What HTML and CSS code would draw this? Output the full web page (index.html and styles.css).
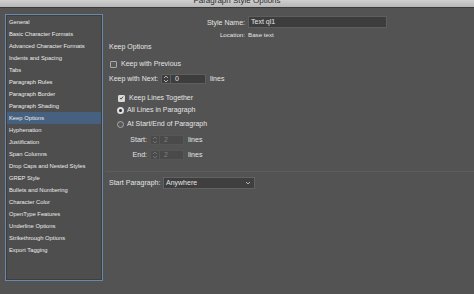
FILE: index.html
```html
<!DOCTYPE html>
<html>
<head>
<meta charset="utf-8">
<link rel="stylesheet" href="styles.css">
</head>
<body>
<div class="window">
  <div class="titlebar"><span class="title">Paragraph Style Options</span></div>
  <div class="main">
    <ul class="nav">
      <li>General</li>
      <li>Basic Character Formats</li>
      <li>Advanced Character Formats</li>
      <li>Indents and Spacing</li>
      <li>Tabs</li>
      <li>Paragraph Rules</li>
      <li>Paragraph Border</li>
      <li>Paragraph Shading</li>
      <li class="active">Keep Options</li>
      <li>Hyphenation</li>
      <li>Justification</li>
      <li>Span Columns</li>
      <li>Drop Caps and Nested Styles</li>
      <li>GREP Style</li>
      <li>Bullets and Numbering</li>
      <li>Character Color</li>
      <li>OpenType Features</li>
      <li>Underline Options</li>
      <li>Strikethrough Options</li>
      <li>Export Tagging</li>
    </ul>
    <div class="content">
      <div class="namerow">
        <span class="lbl">Style Name:</span>
        <div class="textfield">Text ql1</div>
      </div>
      <div class="locrow">
        <span class="lbl">Location:</span>
        <span>Base text</span>
      </div>
      <div class="heading">Keep Options</div>
      <div class="row kwp">
        <span class="check"></span>
        <span>Keep with Previous</span>
      </div>
      <div class="row kwn">
        <span class="kwn-lbl">Keep with Next:</span>
        <div class="spinfield">
          <span class="spin"><svg viewBox="0 0 8 10" width="8" height="10"><path d="M2 4 L4 2 L6 4 M2 6 L4 8 L6 6" fill="none" stroke="#cfcfcf" stroke-width="0.8"/></svg></span>
          <span class="val">0</span>
        </div>
        <span class="unit">lines</span>
      </div>
      <div class="group">
        <div class="row klt">
          <span class="check on"><svg viewBox="0 0 6 6" width="6" height="6"><path d="M1.2 3 L2.5 4.4 L4.9 1.4" fill="none" stroke="#333" stroke-width="1"/></svg></span>
          <span>Keep Lines Together</span>
        </div>
        <div class="row radio-row">
          <span class="radio on"></span>
          <span>All Lines in Paragraph</span>
        </div>
        <div class="row radio-row r2">
          <span class="radio"></span>
          <span>At Start/End of Paragraph</span>
        </div>
        <div class="row se">
          <span class="se-lbl">Start:</span>
          <div class="spinfield small dis">
            <span class="spin"><svg viewBox="0 0 8 10" width="8" height="10"><path d="M2 4 L4 2 L6 4 M2 6 L4 8 L6 6" fill="none" stroke="#7a7a7a" stroke-width="0.8"/></svg></span>
            <span class="val">2</span>
          </div>
          <span class="unit">lines</span>
        </div>
        <div class="row se se2">
          <span class="se-lbl">End:</span>
          <div class="spinfield small dis">
            <span class="spin"><svg viewBox="0 0 8 10" width="8" height="10"><path d="M2 4 L4 2 L6 4 M2 6 L4 8 L6 6" fill="none" stroke="#7a7a7a" stroke-width="0.8"/></svg></span>
            <span class="val">2</span>
          </div>
          <span class="unit">lines</span>
        </div>
      </div>
      <div class="sep"></div>
      <div class="row sp">
        <span class="sp-lbl">Start Paragraph:</span>
        <div class="select">
          <span>Anywhere</span>
          <svg viewBox="0 0 6 4" width="6" height="4"><path d="M1 1 L3 3 L5 1" fill="none" stroke="#cfcfcf" stroke-width="0.8"/></svg>
        </div>
      </div>
    </div>
  </div>
</div>
</body>
</html>
```
FILE: styles.css
```css
* { box-sizing: border-box; }
html, body { margin: 0; padding: 0; }
body {
  width: 474px;
  height: 294px;
  overflow: hidden;
  background: #535353;
  font-family: "Liberation Sans", Arial, sans-serif;
  color: #e4e4e4;
}
.window {
  width: 474px;
  height: 294px;
  display: flex;
  flex-direction: column;
  background: #535353;
}
.titlebar {
  height: 8px;
  background: linear-gradient(#cfcfcf, #b7b7b7);
  border-bottom: 1px solid #3a3a3a;
  display: flex;
  justify-content: center;
  overflow: hidden;
}
.title {
  font-size: 8px;
  line-height: 8px;
  color: #2a2a2a;
  margin-top: -3px;
}
.main {
  display: flex;
  flex: 1;
}
.nav {
  list-style: none;
  margin: 6px 0 0 5px;
  padding: 1px 1px;
  width: 98px;
  height: 267px;
  border: 1px solid #6a88ad;
  box-shadow: inset 0 0 0 1px #3e3e3e;
  background: #4e4e4e;
  font-size: 5.8px;
}
.nav li {
  height: 12px;
  line-height: 12px;
  padding-left: 2px;
  white-space: nowrap;
  color: #ececec;
}
.nav li.active {
  background: #46617f;
}
.content {
  flex: 1;
  padding: 8px 0 0 6px;
  display: flex;
  flex-direction: column;
  font-size: 7px;
}
.namerow {
  display: flex;
  align-items: center;
  height: 12px;
}
.namerow .lbl {
  width: 136px;
  text-align: right;
  margin-right: 3px;
}
.textfield {
  width: 139px;
  height: 12px;
  background: #3d3d3d;
  border: 1px solid #5e5e5e;
  padding-left: 2px;
  line-height: 10px;
  font-size: 7px;
}
.locrow {
  display: flex;
  margin-top: 2px;
  height: 10px;
  line-height: 10px;
  font-size: 6.2px;
}
.locrow .lbl {
  width: 136px;
  text-align: right;
  margin-right: 3px;
}
.heading {
  margin-top: 2px;
  height: 10px;
  line-height: 10px;
}
.row {
  display: flex;
  align-items: center;
  height: 10px;
  line-height: 10px;
}
.kwp { margin-top: 7px; }
.check {
  width: 7px;
  height: 7px;
  border: 1px solid #a8a8a8;
  border-radius: 1px;
  background: #585858;
  margin: 0 4px 0 1px;
  display: flex;
}
.check.on {
  background: #d8d8d8;
  border-color: #d8d8d8;
  align-items: center;
  justify-content: center;
}
.check.on svg { display: block; }
.kwn { margin-top: 5px; }
.kwn-lbl { width: 52px; }
.spinfield {
  width: 45px;
  height: 10px;
  border: 1px solid #5e5e5e;
  background: #3d3d3d;
  display: flex;
  align-items: center;
}
.spin {
  width: 9px;
  height: 8px;
  border-right: 1px solid #5e5e5e;
  display: flex;
  align-items: center;
  justify-content: center;
  overflow: hidden;
}
.spin svg { display: block; }
.val {
  margin-left: 4px;
}
.unit { margin-left: 4px; }
.group {
  margin-top: 9px;
  display: flex;
  flex-direction: column;
}
.klt { padding-left: 8px; }
.radio-row { padding-left: 8px; margin-top: 2px; }
.radio-row.r2 { margin-top: 4px; }
.radio {
  width: 7px;
  height: 7px;
  border-radius: 50%;
  border: 1px solid #a8a8a8;
  background: #585858;
  margin-right: 3px;
}
.radio.on {
  background: #2e2e2e;
  border: 2px solid #dedede;
}
.se { margin-top: 6px; }
.se2 { margin-top: 5px; }
.se-lbl {
  width: 38px;
  text-align: right;
  margin-right: 3px;
}
.spinfield.small { width: 34px; }
.spinfield.dis {
  background: #4a4a4a;
  border-color: #565656;
  color: #808080;
}
.spinfield.dis .spin { border-color: #565656; }
.sep {
  margin-top: 11px;
  margin-left: -4px;
  height: 1px;
  background: #454545;
  border-bottom: 1px solid #5c5c5c;
}
.sp { margin-top: 5px; height: 12px; }
.sp-lbl { width: 54px; }
.select {
  width: 92px;
  height: 12px;
  background: #3f3f3f;
  border: 1px solid #626262;
  display: flex;
  align-items: center;
  justify-content: space-between;
  padding: 0 3px 0 2px;
}
.select svg { display: block; }
```
